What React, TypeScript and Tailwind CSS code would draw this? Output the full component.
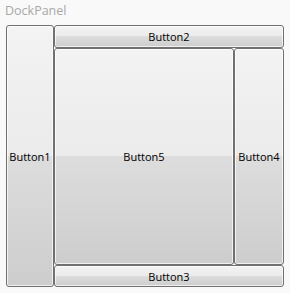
function DockButton({ label, className }: { label: string; className?: string }) {
  return (
    <button
      className={`flex items-center justify-center rounded-[3px] border border-[#707070] bg-[linear-gradient(#f3f3f3_0%,#ebebeb_50%,#dddddd_50%,#cdcdcd_100%)] text-[11px] leading-none text-black shadow-[inset_0_0_0_1px_rgba(255,255,255,0.7)] ${className ?? ""}`}
    >
      {label}
    </button>
  );
}

export default function App() {
  return (
    <div className="h-[293px] w-[290px] bg-[#f9f9f9] font-['Open_Sans','Noto_Sans',sans-serif]">
      <div className="pl-[5px] pt-[2px] text-[12.5px] leading-[17px] text-[#a8a8a8]">DockPanel</div>
      <div className="ml-[6px] mt-[6px] flex h-[262px] w-[278px]">
        <DockButton label="Button1" className="w-[48px]" />
        <div className="flex flex-1 flex-col">
          <DockButton label="Button2" className="h-[23px]" />
          <div className="flex flex-1">
            <DockButton label="Button5" className="flex-1" />
            <DockButton label="Button4" className="w-[50px]" />
          </div>
          <DockButton label="Button3" className="h-[22px]" />
        </div>
      </div>
    </div>
  );
}
